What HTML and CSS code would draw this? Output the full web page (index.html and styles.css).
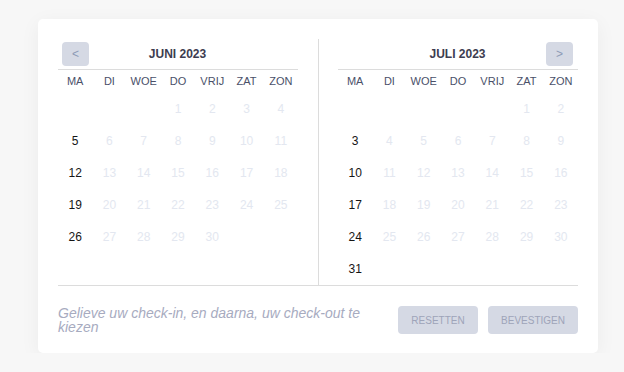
FILE: index.html
```html
<!DOCTYPE html>
<html lang="nl">

<head>
    <meta charset="UTF-8">
    <meta name="viewport" content="width=device-width, initial-scale=1.0">
    <title>Datumkiezer</title>
    <link rel="stylesheet" href="styles.css">
</head>

<body>

    <article class="picker">
        <div class="months">

            <section class="month">
                <header class="month-header">
                    <button class="nav prev">&lt;</button>
                    <h2 class="month-title">JUNI 2023</h2>
                    <span></span>
                </header>
                <div class="weekdays">
                    <span>MA</span><span>DI</span><span>WOE</span><span>DO</span><span>VRIJ</span><span>ZAT</span><span>ZON</span>
                </div>
                <div class="days">
                    <span></span><span></span><span></span><span>1</span><span>2</span><span>3</span><span>4</span>
                    <span class="open">5</span><span>6</span><span>7</span><span>8</span><span>9</span><span>10</span><span>11</span>
                    <span class="open">12</span><span>13</span><span>14</span><span>15</span><span>16</span><span>17</span><span>18</span>
                    <span class="open">19</span><span>20</span><span>21</span><span>22</span><span>23</span><span>24</span><span>25</span>
                    <span class="open">26</span><span>27</span><span>28</span><span>29</span><span>30</span>
                </div>
            </section>

            <div class="divider"></div>

            <section class="month">
                <header class="month-header">
                    <span></span>
                    <h2 class="month-title">JULI 2023</h2>
                    <button class="nav next">&gt;</button>
                </header>
                <div class="weekdays">
                    <span>MA</span><span>DI</span><span>WOE</span><span>DO</span><span>VRIJ</span><span>ZAT</span><span>ZON</span>
                </div>
                <div class="days">
                    <span></span><span></span><span></span><span></span><span></span><span>1</span><span>2</span>
                    <span class="open">3</span><span>4</span><span>5</span><span>6</span><span>7</span><span>8</span><span>9</span>
                    <span class="open">10</span><span>11</span><span>12</span><span>13</span><span>14</span><span>15</span><span>16</span>
                    <span class="open">17</span><span>18</span><span>19</span><span>20</span><span>21</span><span>22</span><span>23</span>
                    <span class="open">24</span><span>25</span><span>26</span><span>27</span><span>28</span><span>29</span><span>30</span>
                    <span class="open">31</span>
                </div>
            </section>

        </div>

        <footer class="picker-footer">
            <p class="hint">Gelieve uw check-in, en daarna, uw check-out te kiezen</p>
            <div class="actions">
                <button class="action reset">RESETTEN</button>
                <button class="action confirm">BEVESTIGEN</button>
            </div>
        </footer>
    </article>

</body>

</html>
```

FILE: styles.css
```css
body {
    font-family: "Liberation Sans", Arial, sans-serif;
    margin: 0;
    padding: 19px 0 0 38px;
    background-color: #f7f7f7;
}

.picker {
    width: 520px;
    padding: 20px 20px 19px 20px;
    background-color: #fff;
    border-radius: 5px;
    box-shadow: 0 4px 20px rgba(0, 0, 0, .05);
}

.months {
    display: grid;
    grid-template-columns: 240px 1fr 240px;
}

.divider {
    width: 1px;
    margin-left: 20px;
    background-color: #dcdcdc;
}

.month-header {
    display: grid;
    grid-template-columns: 27px 1fr 27px;
    align-items: center;
    height: 31px;
    padding: 3px 5px 0 4px;
    box-sizing: border-box;
    border-bottom: 1px solid #dcdcdc;
}

.month-title {
    margin: 0;
    padding-bottom: 3px;
    font-size: 12px;
    font-weight: bold;
    text-align: center;
    color: #3d3d50;
}

.nav {
    align-self: start;
    height: 24px;
    width: 27px;
    padding: 0;
    border: none;
    border-radius: 4px;
    background-color: #d5d9e4;
    color: #8d9ab6;
    font-family: inherit;
    font-size: 12px;
}

.weekdays,
.days {
    display: grid;
    grid-template-columns: repeat(7, 1fr);
    text-align: center;
}

.weekdays span {
    height: 23px;
    line-height: 23px;
    font-size: 11px;
    color: #4a5069;
}

.days span {
    height: 32px;
    line-height: 32px;
    font-size: 12px;
    color: #e3e7f0;
}

.days .open {
    color: #151515;
}

.picker-footer {
    display: flex;
    align-items: center;
    padding-top: 20px;
    border-top: 1px solid #dcdcdc;
}

.hint {
    width: 320px;
    margin: 0;
    font-size: 14px;
    line-height: 14px;
    font-style: italic;
    color: #a7abbf;
}

.actions {
    display: flex;
    gap: 10px;
    margin-left: auto;
}

.action {
    height: 28px;
    padding: 0;
    border: none;
    border-radius: 4px;
    background-color: #d5d9e4;
    color: #9ea4b9;
    font-family: inherit;
    font-size: 10px;
}

.reset {
    width: 80px;
}

.confirm {
    width: 90px;
}
```
